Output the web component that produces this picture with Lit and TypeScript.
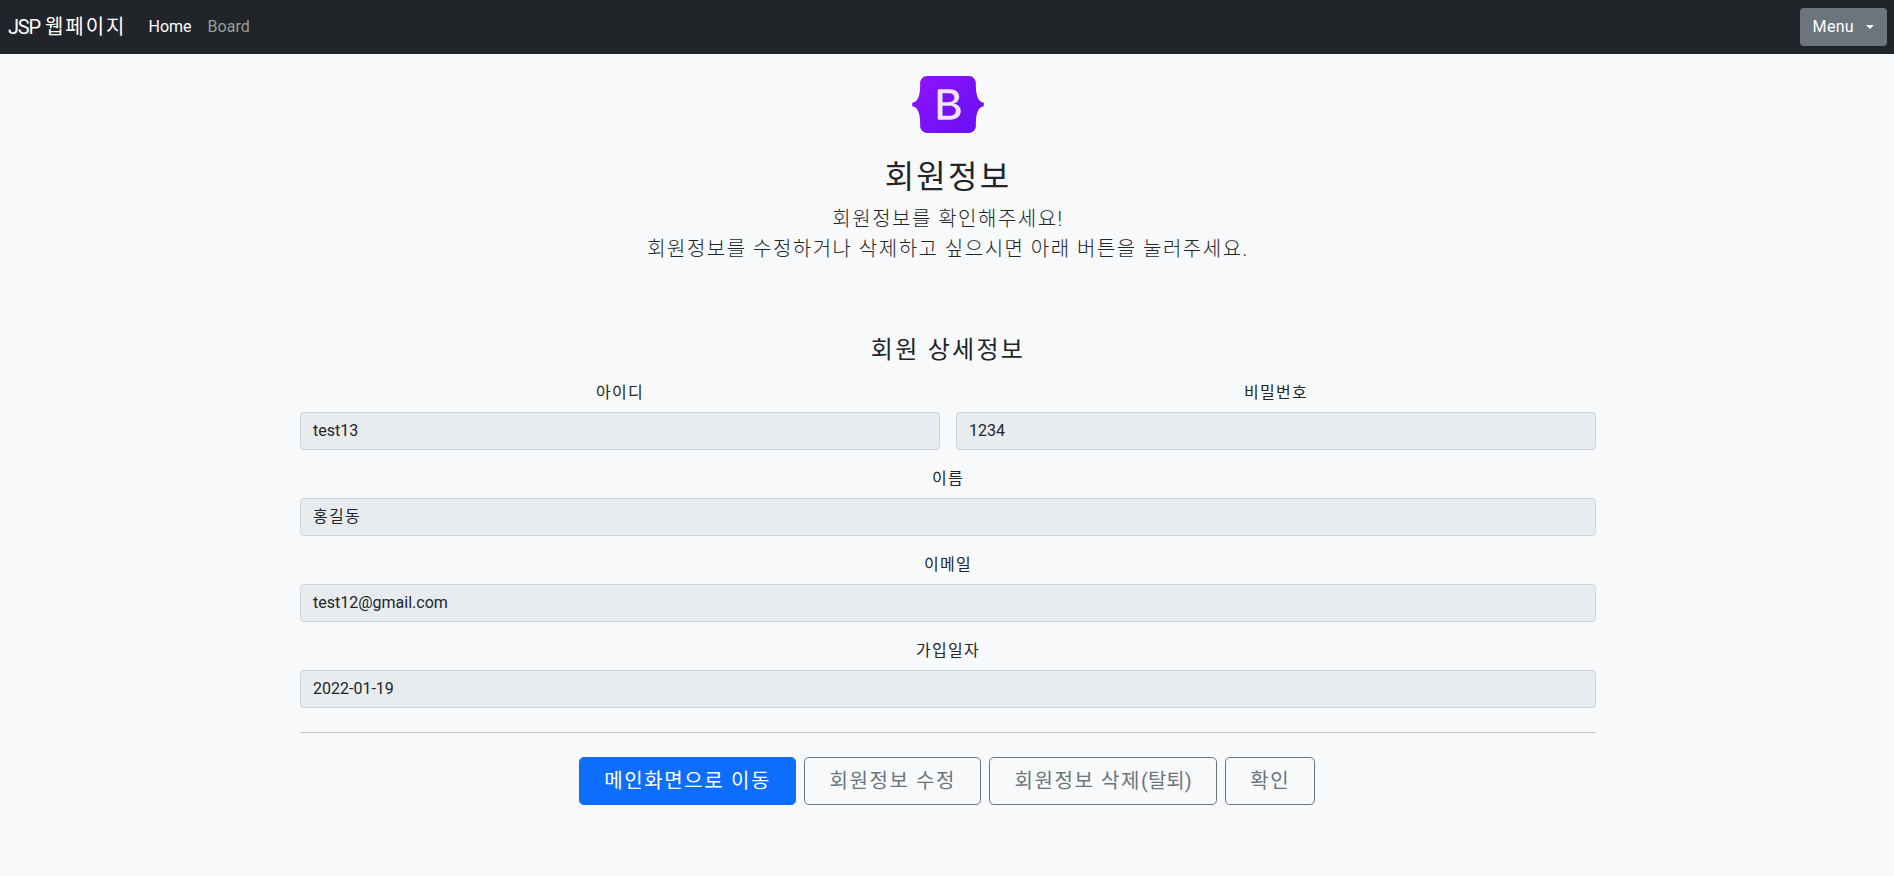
import { LitElement, css, html } from 'lit';
import { customElement } from 'lit/decorators.js';

const LOGO_PATH = "M24.509 0c-6.733 0-11.715 5.893-11.492 12.284.214 6.14-.064 14.092-2.066 20.577C8.943 39.365 5.547 43.485 0 44.014v5.972c5.547.529 8.943 4.649 10.951 11.153 2.002 6.485 2.28 14.437 2.066 20.577C12.794 88.106 17.776 94 24.51 94H93.5c6.733 0 11.714-5.893 11.491-12.284-.214-6.14.064-14.092 2.066-20.577 2.009-6.504 5.396-10.624 10.943-11.153v-5.972c-5.547-.529-8.934-4.649-10.943-11.153-2.002-6.484-2.28-14.437-2.066-20.577C105.214 5.894 100.233 0 93.5 0H24.508zM80 57.863C80 66.663 73.436 72 62.543 72H44a2 2 0 01-2-2V24a2 2 0 012-2h18.437c9.083 0 15.044 4.92 15.044 12.474 0 5.302-4.01 10.049-9.119 10.88v.277C75.317 46.394 80 51.21 80 57.863zM60.521 28.34H49.948v14.934h8.905c6.884 0 10.68-2.772 10.68-7.727 0-4.643-3.264-7.207-8.012-7.207zM49.948 49.2v16.458H60.91c7.167 0 10.964-2.876 10.964-8.281 0-5.406-3.903-8.178-11.425-8.178H49.948z";

@customElement('app-root')
export class AppRoot extends LitElement {
    static styles = css`
        :host{
            display: block;
            min-height: 100vh;
            background: #f8f9fa;
            color: #212529;
            font-family: Roboto, "Noto Sans CJK KR", sans-serif;
            font-size: 16px;
            line-height: 1.5;
        }

        .ko{
            letter-spacing: 0.08em;
        }
        .tight{
            letter-spacing: 0;
        }

        /* navbar */
        .navbar{
            display: flex;
            align-items: center;
            height: 54px;
            padding: 0 7px 0 8px;
            background: #212529;
        }
        .brand{
            margin-right: 14px;
            font-size: 20px;
            color: #fff;
            white-space: nowrap;
        }
        .brand-latin{
            letter-spacing: -0.06em;
        }
        .brand .ko{
            letter-spacing: 0.1em;
        }
        .nav-link{
            padding: 8px;
            color: rgba(255, 255, 255, 0.55);
        }
        .nav-link.active{
            color: #fff;
        }
        .menu{
            display: flex;
            align-items: center;
            height: 38px;
            margin-left: auto;
            padding: 0 13px;
            border-radius: 4px;
            background: #6c757d;
            color: #fff;
            letter-spacing: 0.02em;
        }
        .caret{
            margin-left: 12px;
            border-top: 4.8px solid #fff;
            border-left: 4.8px solid transparent;
            border-right: 4.8px solid transparent;
        }

        /* main */
        .container{
            width: 1296px;
            margin-left: 300px;
        }
        .head{
            display: flex;
            flex-direction: column;
            align-items: center;
            padding-top: 22px;
            text-align: center;
        }
        .logo{
            display: block;
            width: 72px;
            height: 57px;
            margin-bottom: 25px;
        }
        h2{
            margin: 0 0 8px;
            font-size: 32px;
            font-weight: 400;
            line-height: 1.2;
            letter-spacing: 0.07em;
        }
        .lead{
            font-size: 20px;
            font-weight: 300;
            letter-spacing: 0.075em;
        }
        h4{
            margin: 72px 0 15px;
            font-size: 24px;
            font-weight: 400;
            line-height: 1.2;
            text-align: center;
            letter-spacing: 0.095em;
        }
        .fields{
            display: grid;
            grid-template-columns: 1fr 1fr;
            gap: 16px;
        }
        .wide{
            grid-column: 1 / -1;
        }
        .label{
            margin-bottom: 7px;
            padding-top: 1px;
            text-align: center;
        }
        .control{
            height: 38px;
            box-sizing: border-box;
            padding: 6px 12px;
            border: 1px solid #ced4da;
            border-radius: 4px;
            background: #e9ecef;
        }
        hr{
            height: 1px;
            margin: 24px 0;
            border: 0;
            background: #c4c6c8;
        }

        /* buttons */
        .actions{
            display: flex;
            justify-content: center;
            gap: 8.5px;
            padding-right: 1.5px;
        }
        .btn{
            display: flex;
            align-items: center;
            height: 48px;
            box-sizing: border-box;
            padding: 0 24px;
            border: 1px solid #6c757d;
            border-radius: 4.8px;
            color: #6c757d;
            font-size: 20px;
            white-space: pre;
        }
        .btn.primary{
            border-color: #0d6efd;
            background: #0d6efd;
            color: #fff;
        }
    `;

    field(label: string, value: string, wide = true, ko = false) {
        return html`
            <div class="${wide ? "wide" : ""}">
                <div class="label ko">${label}</div>
                <div class="control ${ko ? "ko" : ""}">${value}</div>
            </div>
        `;
    }

    render() {
        return html`
            <nav class="navbar">
                <span class="brand"><span class="brand-latin">JSP</span> <span class="ko">웹페이지</span></span>
                <span class="nav-link active">Home</span>
                <span class="nav-link">Board</span>
                <span class="menu">Menu<i class="caret"></i></span>
            </nav>

            <main class="container">
                <div class="head">
                    <svg class="logo" viewBox="0 0 118 94">
                        <defs>
                            <linearGradient id="bs" x1="0" y1="0" x2="1" y2="1">
                                <stop offset="0" stop-color="#9013fe"></stop>
                                <stop offset="1" stop-color="#6610f2"></stop>
                            </linearGradient>
                        </defs>
                        <rect x="40" y="20" width="42" height="54" fill="#f1e6fe"></rect>
                        <path fill="url(#bs)" fill-rule="evenodd" d="${LOGO_PATH}"></path>
                    </svg>
                    <h2>회원정보</h2>
                    <div class="lead">회원정보를 확인해주세요!<br />회원정보를 수정하거나 삭제하고 싶으시면 아래 버튼을 눌러주세요.</div>
                </div>

                <h4>회원 상세정보</h4>

                <div class="fields">
                    ${this.field("아이디", "test13", false)}
                    ${this.field("비밀번호", "1234", false)}
                    ${this.field("이름", "홍길동", true, true)}
                    ${this.field("이메일", "test12@gmail.com")}
                    ${this.field("가입일자", "2022-01-19")}
                </div>

                <hr />

                <div class="actions">
                    <span class="btn primary ko">메인화면으로 이동</span>
                    <span class="btn ko">회원정보 수정</span>
                    <span class="btn ko">회원정보 삭제<span class="tight">(탈퇴)</span></span>
                    <span class="btn ko">확인</span>
                </div>
            </main>
        `;
    }
}
